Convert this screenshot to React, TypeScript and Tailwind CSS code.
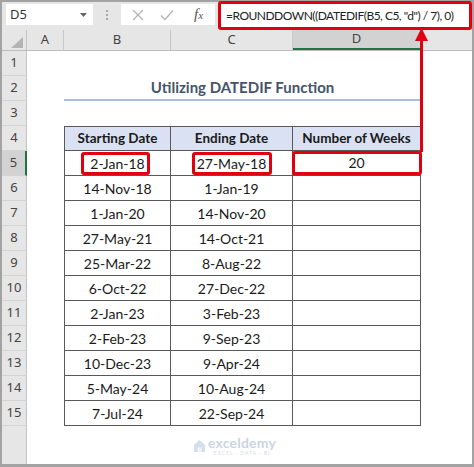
import React from "react";

const rowsB = ["2-Jan-18","14-Nov-18","1-Jan-20","27-May-21","25-Mar-22","6-Oct-22","2-Jan-23","2-Feb-23","10-Dec-23","5-May-24","7-Jul-24"];
const rowsC = ["27-May-18","1-Jan-19","14-Nov-20","14-Oct-21","8-Aug-22","27-Dec-22","3-Feb-23","9-Sep-23","9-Apr-24","10-Aug-24","22-Sep-24"];

function RowHead({ n, active }: { n: number; active?: boolean }) {
  return (
    <div
      className={
        "w-[25px] shrink-0 h-full flex items-center justify-center text-[13px] text-[#444] font-['Noto_Sans',sans-serif] border-b border-[#d4d4d4] " +
        (active ? "bg-[#d2d2d2] border-r-2 border-r-[#217346]" : "bg-[#e6e6e6] border-r border-r-[#c4c4c4]")
      }
    >
      {n}
    </div>
  );
}

export default function App() {
  const rows: React.ReactNode[] = [];
  for (let i = 1; i <= 15; i++) {
    let content: React.ReactNode = null;
    if (i === 2) {
      content = (
        <div className="w-[357px] h-full border-b-2 border-[#a8bfe3] flex items-center justify-center text-[15px] font-bold text-[#44546a]">
          Utilizing DATEDIF Function
        </div>
      );
    } else if (i === 4) {
      content = (
        <>
          <div className="w-[107px] h-full bg-[#d9e1f2] border border-[#595959] flex items-center justify-center font-bold text-[13.5px]">Starting Date</div>
          <div className="w-[122px] h-full bg-[#d9e1f2] border-y border-r border-[#595959] flex items-center justify-center font-bold text-[13.5px]">Ending Date</div>
          <div className="w-[128px] h-full bg-[#d9e1f2] border-y border-r border-[#595959] flex items-center justify-center font-bold text-[13.5px]">Number of Weeks</div>
        </>
      );
    } else if (i >= 5) {
      const k = i - 5;
      content = (
        <>
          <div className="w-[107px] h-full border-l border-r border-b border-[#595959] flex items-center justify-center">{rowsB[k]}</div>
          <div className="w-[122px] h-full border-r border-b border-[#595959] flex items-center justify-center">{rowsC[k]}</div>
          <div className={"w-[128px] h-full border-r border-[#595959] flex items-center justify-center " + (i === 5 ? "border-b-2 border-b-[#217346]" : "border-b")}>{i === 5 ? "20" : ""}</div>
        </>
      );
    }
    rows.push(
      <div key={i} className="h-[25px] flex">
        <RowHead n={i} active={i === 5} />
        <div className="w-[37px] shrink-0" />
        {content}
      </div>
    );
  }

  return (
    <div className="relative w-[474px] h-[467px] bg-[#a3a3a3] pt-[2px] pl-[2px] pr-[2px] pb-[3px] overflow-hidden font-['Lato',sans-serif] text-[14px] text-[#1a1a1a]">
      <div className="h-full flex flex-col bg-white overflow-hidden">
        {/* formula bar */}
        <div className="h-[28px] shrink-0 bg-[#e6e6e6] flex items-start pt-[2px]">
          <div className="ml-[4px] w-[87px] shrink-0 h-[21px] bg-white flex items-center justify-between pl-[4px] pr-[6px] font-['Noto_Sans',sans-serif] text-[13px] text-[#333]">
            <span>D5</span>
            <svg width="7" height="4" viewBox="0 0 7 4"><path d="M0 0h7L3.5 4z" fill="#666" /></svg>
          </div>
          <div className="w-[28px] shrink-0 h-[21px] flex flex-col items-center justify-center gap-[2px]">
            <span className="w-[2px] h-[2px] bg-[#a8a8a8]" />
            <span className="w-[2px] h-[2px] bg-[#a8a8a8]" />
            <span className="w-[2px] h-[2px] bg-[#a8a8a8]" />
          </div>
          <div className="w-[94px] shrink-0 h-[21px] bg-white flex items-center pl-[11px]">
            <svg width="12" height="12" viewBox="0 0 12 12"><path d="M1 1L11 11M11 1L1 11" stroke="#b3b3b3" strokeWidth="1.3" /></svg>
            <svg className="ml-[16px]" width="14" height="12" viewBox="0 0 14 12"><path d="M1 6.5L5 10.5L13 1.5" stroke="#b3b3b3" strokeWidth="1.3" fill="none" /></svg>
            <span className="ml-[20px] font-['Liberation_Serif',serif] italic text-[15px] text-[#555] leading-none">f<span className="text-[11px]">x</span></span>
          </div>
          <div className="ml-[3px] flex-1 min-w-0 h-[24px] bg-white flex items-center pl-[8px] text-[12px] tracking-[-0.5px] text-[#222] whitespace-nowrap overflow-hidden">
            =ROUNDDOWN((DATEDIF(B5, C5, "d") / 7), 0)
          </div>
        </div>

        {/* column header */}
        <div className="h-[21px] shrink-0 flex bg-[#e6e6e6] border-b border-[#bcbcbc] font-['Noto_Sans',sans-serif] text-[13px] text-[#444]">
          <div className="w-[25px] shrink-0 h-full border-r border-[#c4c4c4] flex items-end justify-end pr-[3px] pb-[2px]">
            <svg width="12" height="11" viewBox="0 0 12 11"><path d="M12 0V11H0z" fill="#b4b4b4" /></svg>
          </div>
          <div className="w-[37px] shrink-0 border-r border-[#c8c8c8] flex items-center justify-center">A</div>
          <div className="w-[107px] shrink-0 border-r border-[#c8c8c8] flex items-center justify-center">B</div>
          <div className="w-[122px] shrink-0 border-r border-[#c8c8c8] flex items-center justify-center">C</div>
          <div className="w-[128px] shrink-0 bg-[#d2d2d2] border-r border-[#c8c8c8] border-b-2 border-b-[#217346] flex items-center justify-center">D</div>
          <div className="flex-1" />
        </div>

        {/* grid rows */}
        <div className="flex flex-col shrink-0">{rows}</div>

        {/* remainder */}
        <div className="flex-1 flex">
          <div className="w-[25px] shrink-0 h-full bg-[#e6e6e6] border-r border-[#c4c4c4]" />
          <div className="flex-1 flex pl-[166px] pt-[11px]">
            <div className="flex items-center gap-[2px] opacity-50 h-[18px]">
              <svg width="13" height="14" viewBox="0 0 13 14">
                <path d="M1 6L6.5 1L12 6V13H1z" fill="#aebfdb" />
                <path d="M4.5 13V8.5H8.5V13z" fill="#e4eaf3" />
              </svg>
              <div className="flex flex-col items-center leading-none">
                <span className="text-[14px] font-bold text-[#98abcb] tracking-[0.2px]">exceldemy</span>
                <span className="text-[5px] text-[#aab8d0] tracking-[1px] mt-[1px]">EXCEL · DATA · BI</span>
              </div>
            </div>
          </div>
        </div>
      </div>

      {/* annotations */}
      <div className="absolute left-[218px] top-[1px] w-[254px] h-[29px] border-[3px] border-[#e0000f] rounded-[3px]" />
      <div className="absolute left-[81px] top-[152px] w-[69px] h-[23px] border-[3px] border-[#e0000f] rounded-[3px]" />
      <div className="absolute left-[192px] top-[152px] w-[80px] h-[23px] border-[3px] border-[#e0000f] rounded-[3px]" />
      <div className="absolute left-[292px] top-[151px] w-[130px] h-[24px] border-[3px] border-[#e0000f] rounded-[3px]" />
      <div className="absolute left-[420px] top-[38px] w-[3px] h-[114px] bg-[#e0000f]" />
      <svg className="absolute left-[415px] top-[28px]" width="13" height="13" viewBox="0 0 13 13">
        <path d="M6.5 0L13 13H0z" fill="#e0000f" />
      </svg>
    </div>
  );
}
